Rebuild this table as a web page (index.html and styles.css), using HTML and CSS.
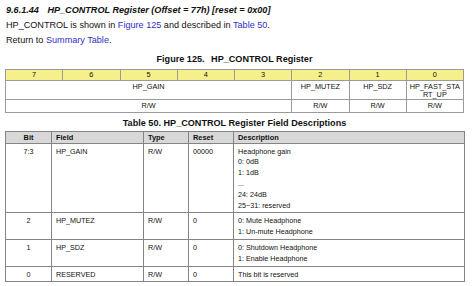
FILE: index.html
```html
<!DOCTYPE html>
<html>
<head>
<meta charset="utf-8">
<link rel="stylesheet" href="styles.css">
</head>
<body>
<div class="page">
  <p class="sec-title"><span class="sec-num">9.6.1.44</span> HP_CONTROL Register (Offset = 77h) [reset = 0x00]</p>
  <p class="line">HP_CONTROL is shown in <a class="lnk">Figure 125</a> and described in <a class="lnk">Table 50</a>.</p>
  <p class="line">Return to <a class="lnk">Summary Table</a>.</p>

  <p class="caption cap-fig"><span class="cap-num">Figure 125.</span> HP_CONTROL Register</p>
  <table class="reg">
    <colgroup>
      <col><col><col><col><col><col><col><col>
    </colgroup>
    <tr class="reg-head">
      <td>7</td><td>6</td><td>5</td><td>4</td><td>3</td><td>2</td><td>1</td><td>0</td>
    </tr>
    <tr class="reg-names">
      <td colspan="5">HP_GAIN</td>
      <td>HP_MUTEZ</td>
      <td>HP_SDZ</td>
      <td>HP_FAST_STA<br>RT_UP</td>
    </tr>
    <tr class="reg-access">
      <td colspan="5">R/W</td>
      <td>R/W</td>
      <td>R/W</td>
      <td>R/W</td>
    </tr>
  </table>

  <p class="caption cap-tab">Table 50. HP_CONTROL Register Field Descriptions</p>
  <table class="fields">
    <colgroup>
      <col class="c-bit"><col class="c-field"><col class="c-type"><col class="c-reset"><col class="c-desc">
    </colgroup>
    <tr class="f-head">
      <th class="center">Bit</th><th>Field</th><th>Type</th><th>Reset</th><th>Description</th>
    </tr>
    <tr>
      <td class="center">7:3</td><td>HP_GAIN</td><td>R/W</td><td>00000</td>
      <td>Headphone gain<br>0: 0dB<br>1: 1dB<br>...<br>24: 24dB<br>25~31: reserved</td>
    </tr>
    <tr>
      <td class="center">2</td><td>HP_MUTEZ</td><td>R/W</td><td>0</td>
      <td>0: Mute Headphone<br>1: Un-mute Headphone</td>
    </tr>
    <tr>
      <td class="center">1</td><td>HP_SDZ</td><td>R/W</td><td>0</td>
      <td>0: Shutdown Headphone<br>1: Enable Headphone</td>
    </tr>
    <tr>
      <td class="center">0</td><td>RESERVED</td><td>R/W</td><td>0</td>
      <td>This bit is reserved</td>
    </tr>
  </table>
</div>
</body>
</html>
```
FILE: styles.css
```css
html, body {
  margin: 0;
  padding: 0;
  background: #ffffff;
}
body {
  font-family: "Liberation Sans", Arial, sans-serif;
  color: #111;
}
.page {
  padding: 3px 0 0 5px;
}
p {
  margin: 0;
}
.sec-title {
  padding-left: 1px;
  font-size: 9.1px;
  line-height: 15px;
  font-weight: bold;
  font-style: italic;
}
.sec-num {
  margin-right: 6px;
}
.line {
  padding-left: 1px;
  font-size: 9.1px;
  line-height: 15.3px;
}
.lnk {
  color: #2f2fc8;
  text-decoration: none;
}
.caption {
  width: 459px;
  text-align: center;
  font-size: 9.1px;
  font-weight: bold;
  line-height: 12px;
}
.cap-fig {
  margin-top: 4px;
  margin-bottom: 4px;
}
.cap-num {
  margin-right: 4px;
}
.cap-tab {
  margin-top: 4px;
  margin-bottom: 2px;
}
table {
  border-collapse: collapse;
  table-layout: fixed;
  width: 459px;
}
.reg td {
  border: 1px solid #9a9a9a;
  text-align: center;
  font-size: 7.3px;
  padding: 0;
}
.reg-head td {
  background: #f6f08c;
  height: 10px;
  line-height: 10px;
}
.reg-names td {
  vertical-align: top;
  height: 19px;
  line-height: 8px;
  padding-top: 2px;
  box-sizing: border-box;
}
.reg-access td {
  height: 12px;
  line-height: 12px;
}
.fields th,
.fields td {
  border: 1px solid #848484;
  text-align: left;
  vertical-align: top;
  padding: 3px 4px 1px 4px;
  font-size: 7.2px;
  line-height: 10.8px;
  font-weight: normal;
}
.fields th {
  background: #d8d8d8;
  font-weight: bold;
  font-size: 7.4px;
  line-height: 10px;
  padding-top: 1px;
  padding-bottom: 0;
}
.fields .center {
  text-align: center;
}
.c-bit { width: 46px; }
.c-field { width: 92px; }
.c-type { width: 45px; }
.c-reset { width: 45px; }
.c-desc { width: 231px; }
```
